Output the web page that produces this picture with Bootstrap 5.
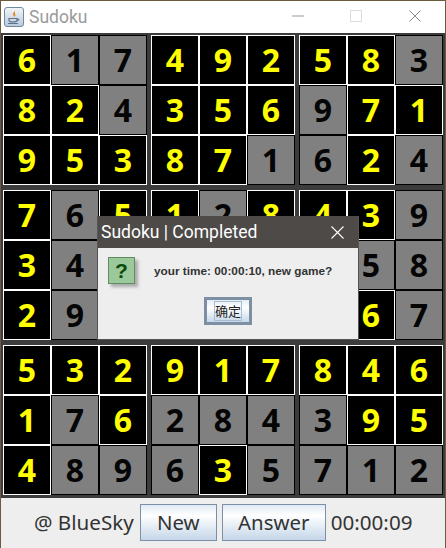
<!DOCTYPE html>
<html lang="en">
<head>
<meta charset="utf-8">
<title>Sudoku</title>
<link href="https://cdn.jsdelivr.net/npm/bootstrap@5.3.0/dist/css/bootstrap.min.css" rel="stylesheet">
<style>
html,body{height:100%;margin:0;background:#6b5a3c;overflow:hidden}
.win{margin:1px 1px 0 1px;height:547px;background:#eee;position:relative;font-family:"Noto Sans","Open Sans",sans-serif}
.titlebar{height:32px;background:#fff;color:#9a9a9a;font-family:Roboto,sans-serif;font-size:17.5px;padding-left:3px;gap:5px}
.ctls{position:absolute;top:9px;left:0;width:100%;height:14px}
.ctls svg{position:absolute;top:0}
.board{background:#3c3c3c;padding:2px 2px 3px 2px;display:grid;grid-template-columns:repeat(3,144px);column-gap:4px;row-gap:5px}
.blk{display:grid;grid-template-columns:repeat(3,48px);grid-auto-rows:50px}
.sq{display:flex;align-items:center;justify-content:center;font-weight:700;font-size:32px;line-height:1;border:1px solid}
.on{background:#000;color:#ff0;border-color:#fff}
.off{background:#808080;color:#050505;border-color:#000}
.bottombar{height:50px;background:#eee;color:#333;font-size:20.6px;padding-left:33px;padding-bottom:2px}
.jbtn{border:1px solid #7b8fa6;border-radius:0;padding:0;height:37px;color:#333;font-size:20.4px;background:linear-gradient(#dfe9f3 0%,#fff 30%,#c4d6e8 100%);line-height:1}
.jbtn:hover{color:#333}
.b-new{width:77px;margin-left:6px}
.b-ans{width:104px;margin-left:5px;margin-right:5px}
.dlg{position:absolute;left:96px;top:215px;width:262px;height:124px;background:#eee;border:1px solid #555;border-top:0}
.dlgtitle{height:32px;background:#4d4a48;color:#fff;font-family:Roboto,sans-serif;font-size:17.5px;padding-left:3px;padding-right:14px}
.qbox{width:27px;height:27px;background:#9cc99b;border:1px solid #5f8c60;box-shadow:3px 3px 3px #aaa;color:#0d4a0d;font:700 21px/25px "Liberation Sans",sans-serif;text-align:center;margin-left:10px}
.dlgmsg{font:700 11.8px "Liberation Sans",sans-serif;color:#333;margin-left:19px;white-space:nowrap}
.dlgrow{margin-top:9px;height:27px}
.okwrap{margin-top:13px}
.okbtn{width:48px;height:28px;border:3px solid #7d8fa3;border-radius:0;padding:0;background:linear-gradient(#e3ecf5,#fff 35%,#c6d8e9);color:#222;font:13px/1 "Noto Sans CJK SC",sans-serif}
.okbtn:hover{color:#222}
.okin{display:inline-block;border:1px solid #a9bdd2;width:28px;height:20px;line-height:18px;white-space:nowrap;vertical-align:middle}
</style>
</head>
<body>
<div class="win">
  <div class="titlebar d-flex align-items-center">
    <svg width="20" height="20" viewBox="0 0 20 20">
      <defs><linearGradient id="jg" x1="0" y1="0" x2="0" y2="1"><stop offset="0" stop-color="#f4f6f8"/><stop offset="1" stop-color="#b9c9d9"/></linearGradient></defs>
      <rect x=".5" y=".5" width="19" height="19" rx="2.5" fill="url(#jg)" stroke="#6d8aa6"/>
      <path d="M10.5 3c1 1.500-2 2.700-1.500 4.500.2.800 1 1.500 1 2.500 1.500-1 1.800-2 1-3.200C10.500 5.500 11.500 4.500 10.500 3z" fill="#e8862a"/>
      <path d="M5 11.500h8v1.500c0 1.400-1.300 2-4 2s-4-.6-4-2z" fill="none" stroke="#5a7590" stroke-width="1.200"/>
      <path d="M13 12h1.500c1 0 1 1.500-1.500 1.800M4 16.500h10" fill="none" stroke="#5a7590" stroke-width="1"/>
    </svg>
    <span>Sudoku</span>
  </div>
  <div class="ctls" aria-hidden="true">
    <svg style="left:291px" width="12" height="12" viewBox="0 0 12 12"><path d="M0 6h12" stroke="#999" stroke-width="1"/></svg>
    <svg style="left:349px" width="12" height="12" viewBox="0 0 12 12"><rect x=".5" y=".5" width="11" height="11" fill="none" stroke="#ddd"/></svg>
    <svg style="left:408px" width="12" height="12" viewBox="0 0 12 12"><path d="M.5.500l11 11M11.500.500l-11 11" stroke="#888" stroke-width="1"/></svg>
  </div>
  <div class="board">
    <div class="blk">
      <div class="sq on">6</div><div class="sq off">1</div><div class="sq off">7</div>
      <div class="sq on">8</div><div class="sq on">2</div><div class="sq off">4</div>
      <div class="sq on">9</div><div class="sq on">5</div><div class="sq on">3</div>
    </div>
    <div class="blk">
      <div class="sq on">4</div><div class="sq on">9</div><div class="sq on">2</div>
      <div class="sq on">3</div><div class="sq on">5</div><div class="sq on">6</div>
      <div class="sq on">8</div><div class="sq on">7</div><div class="sq off">1</div>
    </div>
    <div class="blk">
      <div class="sq on">5</div><div class="sq on">8</div><div class="sq off">3</div>
      <div class="sq off">9</div><div class="sq on">7</div><div class="sq on">1</div>
      <div class="sq off">6</div><div class="sq on">2</div><div class="sq off">4</div>
    </div>
    <div class="blk">
      <div class="sq on">7</div><div class="sq off">6</div><div class="sq on">5</div>
      <div class="sq on">3</div><div class="sq off">4</div><div class="sq off">&nbsp;</div>
      <div class="sq on">2</div><div class="sq off">9</div><div class="sq off">&nbsp;</div>
    </div>
    <div class="blk">
      <div class="sq on">1</div><div class="sq off">2</div><div class="sq on">8</div>
      <div class="sq off">&nbsp;</div><div class="sq off">&nbsp;</div><div class="sq off">&nbsp;</div>
      <div class="sq off">&nbsp;</div><div class="sq off">&nbsp;</div><div class="sq off">&nbsp;</div>
    </div>
    <div class="blk">
      <div class="sq on">4</div><div class="sq on">3</div><div class="sq off">9</div>
      <div class="sq off">&nbsp;</div><div class="sq off">5</div><div class="sq off">8</div>
      <div class="sq off">&nbsp;</div><div class="sq on">6</div><div class="sq off">7</div>
    </div>
    <div class="blk">
      <div class="sq on">5</div><div class="sq on">3</div><div class="sq on">2</div>
      <div class="sq on">1</div><div class="sq off">7</div><div class="sq on">6</div>
      <div class="sq on">4</div><div class="sq off">8</div><div class="sq off">9</div>
    </div>
    <div class="blk">
      <div class="sq on">9</div><div class="sq on">1</div><div class="sq on">7</div>
      <div class="sq off">2</div><div class="sq off">8</div><div class="sq off">4</div>
      <div class="sq off">6</div><div class="sq on">3</div><div class="sq off">5</div>
    </div>
    <div class="blk">
      <div class="sq on">8</div><div class="sq on">4</div><div class="sq on">6</div>
      <div class="sq off">3</div><div class="sq on">9</div><div class="sq on">5</div>
      <div class="sq off">7</div><div class="sq off">1</div><div class="sq off">2</div>
    </div>
  </div>
  <div class="bottombar d-flex align-items-center">
    <span>@ BlueSky</span>
    <button type="button" class="btn jbtn b-new">New</button>
    <button type="button" class="btn jbtn b-ans">Answer</button>
    <span>00:00:09</span>
  </div>
  <div class="dlg">
    <div class="dlgtitle d-flex align-items-center justify-content-between">
      <span>Sudoku | Completed</span>
      <svg width="13" height="13" viewBox="0 0 13 13"><path d="M.5.500l12 12M12.500.500l-12 12" stroke="#fff" stroke-width="1.100"/></svg>
    </div>
    <div class="d-flex align-items-center dlgrow">
      <div class="qbox">?</div>
      <div class="dlgmsg">your time: 00:00:10, new game?</div>
    </div>
    <div class="okwrap d-flex justify-content-center">
      <button type="button" class="btn okbtn"><span class="okin">确定</span></button>
    </div>
  </div>
</div>
</body>
</html>
